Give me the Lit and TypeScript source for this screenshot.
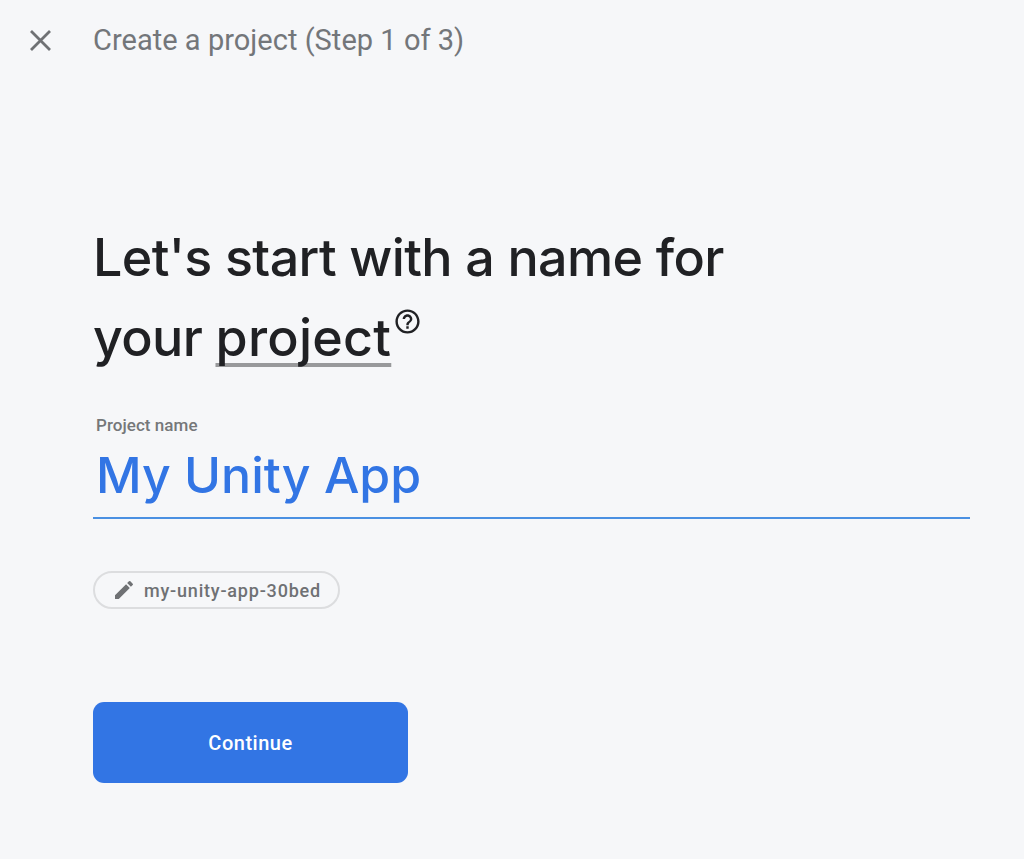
import { LitElement, html, css } from "lit";
import { customElement } from "lit/decorators.js";

@customElement("app-root")
export class AppRoot extends LitElement {
  static styles = css`
    :host {
      display: block;
      width: 1024px;
      height: 859px;
      background: #f6f7f9;
      font-family: Roboto, "Liberation Sans", sans-serif;
      overflow: hidden;
    }
    .top {
      display: flex;
      align-items: center;
      height: 80px;
      padding-left: 28px;
    }
    .close { width: 25px; height: 25px; margin-right: 40px; display: block; }
    .step { font-size: 29px; color: #73767a; letter-spacing: 0.03px; }
    .main {
      display: flex;
      flex-direction: column;
      align-items: flex-start;
      padding: 0 54px 0 93px;
    }
    h1 {
      margin: 138px 0 0;
      font-family: Inter, "Open Sans", sans-serif;
      font-size: 52px;
      font-weight: 500;
      line-height: 80px;
      color: #202124;
      letter-spacing: -0.62px;
    }
    .term {
      letter-spacing: 0.25px;
      text-decoration: underline;
      text-decoration-color: #98999b;
      text-decoration-thickness: 4px;
      text-underline-offset: 7px;
      text-decoration-skip-ink: none;
    }
    .help { display: inline-block; width: 29px; height: 29px; vertical-align: 20px; margin-left: 2px; }
    .field { width: 100%; margin-top: 36px; border-bottom: 2px solid #4a90e2; }
    .label { margin-left: 3px; font-size: 17px; line-height: 22px; color: #757779; font-weight: 500; letter-spacing: 0.05px; }
    .value {
      margin-left: 3px;
      font-family: Inter, "Open Sans", sans-serif;
      font-size: 50px;
      font-weight: 500;
      line-height: 70px;
      color: #3275e4;
      padding: 4px 0 7px;
      letter-spacing: 0;
    }
    .chip {
      display: flex;
      align-items: center;
      gap: 8px;
      box-sizing: border-box;
      margin-top: 52px;
      height: 38px;
      width: 247px;
      padding-left: 19px;
      border: 2px solid #dcdddf;
      border-radius: 19px;
      font-size: 18px;
      font-weight: 500;
      letter-spacing: 0.8px;
      color: #6f7174;
    }
    .chip svg { width: 24px; height: 24px; margin-left: -2px; }
    button {
      margin-top: 93px;
      width: 315px;
      height: 81px;
      border: 0;
      border-radius: 11px;
      background: #3275e4;
      color: #fff;
      font-family: Roboto, "Liberation Sans", sans-serif;
      font-size: 20px;
      font-weight: 500;
      letter-spacing: 0.5px;
    }
  `;

  render() {
    return html`
      <div class="top">
        <svg class="close" viewBox="0 0 25 25"><path d="M3 3L22 22M22 3L3 22" stroke="#6f7174" stroke-width="2.8" fill="none"/></svg>
        <span class="step">Create a project (Step 1 of 3)</span>
      </div>
      <div class="main">
        <h1>Let's start with a name for<br />your <span class="term">project</span><svg class="help" viewBox="0 0 24 24"><path fill="#202124" d="M11 18h2v-2h-2v2zm1-16C6.48 2 2 6.48 2 12s4.48 10 10 10 10-4.48 10-10S17.52 2 12 2zm0 18c-4.41 0-8-3.59-8-8s3.59-8 8-8 8 3.59 8 8-3.59 8-8 8zm0-14c-2.21 0-4 1.79-4 4h2c0-1.1.9-2 2-2s2 .9 2 2c0 2-3 1.75-3 5h2c0-2.25 3-2.5 3-5 0-2.21-1.79-4-4-4z"/></svg></h1>
        <div class="field">
          <div class="label">Project name</div>
          <div class="value">My Unity App</div>
        </div>
        <div class="chip">
          <svg viewBox="0 0 24 24"><path fill="#6f7174" d="M3 17.25V21h3.75L17.81 9.94l-3.75-3.75L3 17.25zM20.71 7.04a1 1 0 0 0 0-1.41l-2.34-2.34a1 1 0 0 0-1.41 0l-1.83 1.83 3.75 3.75 1.83-1.83z"/></svg>
          my-unity-app-30bed
        </div>
        <button>Continue</button>
      </div>
    `;
  }
}
